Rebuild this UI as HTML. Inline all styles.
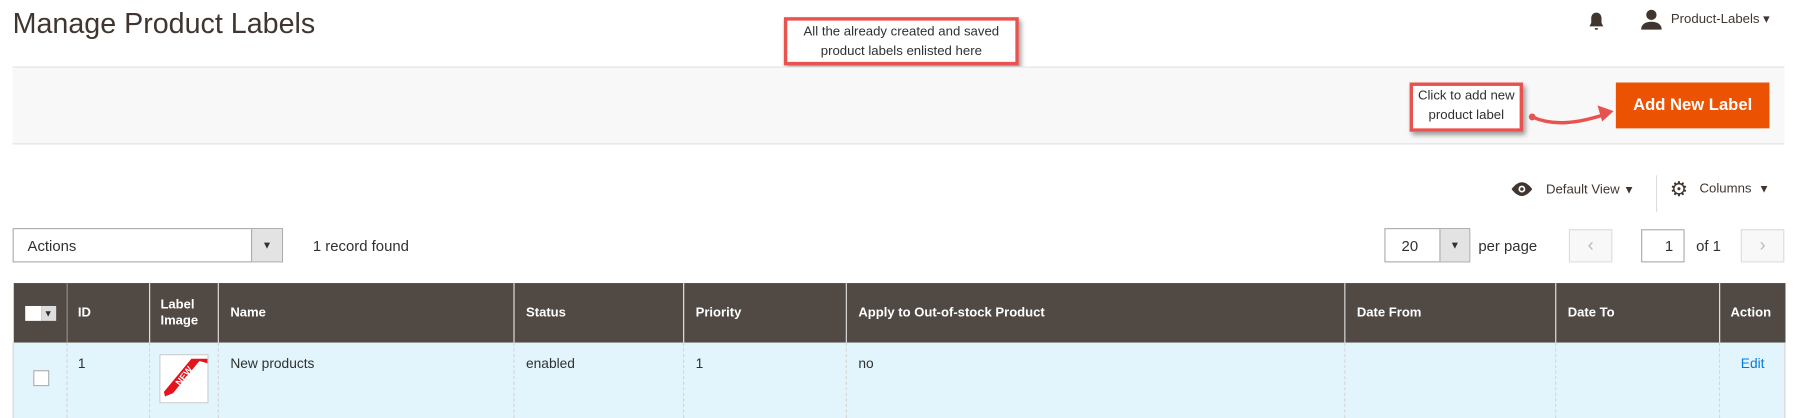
<!DOCTYPE html><html><head><style>
*{box-sizing:border-box;margin:0;padding:0}
body{width:1797px;height:417px;overflow:hidden;background:#fff;font-family:"Liberation Sans",sans-serif;color:#303030;position:relative}
#w{position:absolute;left:0;top:0;width:1568px;height:364px;transform:scale(1.146);transform-origin:0 0}
.a{position:absolute}
th,td{font-size:12px;text-align:left;vertical-align:top}
th{font-size:11.4px}
</style></head><body><div id="w">
<div class="a" style="left:11px;top:7px;font-size:25px;color:#41362f">Manage Product Labels</div>
<div class="a" style="left:684px;top:15px;width:205px;height:42px;border:3px solid #e9534f;background:#fff;box-shadow:2px 3px 4px #999;font-size:11.5px;text-align:center;line-height:17px;padding-top:2px">All the already created and saved<br>product labels enlisted here</div>
<svg class="a" style="left:1386px;top:10px" width="14" height="18" viewBox="0 0 14 18"><path d="M7 1c-3 0-4.5 2.5-4.5 5v4L1 13h12l-1.5-3V6C11.5 3.5 10 1 7 1z M5.5 14.5a1.5 1.5 0 003 0z" fill="#41362f"/></svg>
<svg class="a" style="left:1432px;top:8px" width="18" height="18" viewBox="0 0 18 18"><circle cx="9" cy="5" r="4.5" fill="#41362f"/><path d="M0 18c0-5 4-7 9-7s9 2 9 7z" fill="#41362f"/></svg>
<div class="a" style="left:1458px;top:9px;font-size:11.5px;color:#41362f">Product-Labels ▾</div>
<div class="a" style="left:11px;top:58px;width:1546px;height:68px;background:#f8f8f8;border-top:1px solid #e3e3e3;border-bottom:1px solid #e3e3e3"></div>
<div class="a" style="left:1230px;top:72px;width:99px;height:43px;border:3px solid #e9534f;background:#fff;box-shadow:2px 3px 4px #999;font-size:11.5px;text-align:center;line-height:17px;padding-top:1px">Click to add new<br>product label</div>
<svg class="a" style="left:1330px;top:80px" width="82" height="30"><path d="M7 22 C25 30 45 28 70 20" stroke="#e9534f" stroke-width="3" fill="none"/><circle cx="7" cy="22" r="3" fill="#e9534f"/><path d="M78 17 L64 12 L68 26z" fill="#e9534f"/></svg>
<div class="a" style="left:1410px;top:72px;width:134px;height:40px;background:#eb5202;color:#fff;font-weight:bold;font-size:14.5px;text-align:center;line-height:40px">Add New Label</div>
<svg class="a" style="left:1318px;top:158px" width="20" height="14" viewBox="0 0 20 14"><path d="M10 1C5 1 1 7 1 7s4 6 9 6 9-6 9-6-4-6-9-6z" fill="#41362f"/><circle cx="10" cy="7" r="3" fill="#fff"/><circle cx="10" cy="7" r="1.5" fill="#41362f"/></svg>
<div class="a" style="left:1349px;top:160px;font-size:11.5px;color:#41362f">Default View <span style="font-size:10px">▼</span></div>
<div class="a" style="left:1445px;top:153px;width:1px;height:32px;background:#ddd"></div>
<div class="a" style="left:1457px;top:156px;font-size:18px;color:#41362f;line-height:18px">⚙</div>
<div class="a" style="left:1483px;top:159px;font-size:11.5px;color:#41362f">Columns <span style="font-size:10px">&nbsp;▼</span></div>
<div class="a" style="left:11px;top:199px;width:236px;height:30px;border:1px solid #adadad;background:#fff;font-size:13px;padding:7px 12px">Actions</div>
<div class="a" style="left:219px;top:200px;width:27px;height:28px;background:#e3e3e3;border-left:1px solid #adadad;font-size:9px;text-align:center;line-height:28px">▼</div>
<div class="a" style="left:273px;top:207px;font-size:13px">1 record found</div>
<div class="a" style="left:1208px;top:199px;width:75px;height:30px;border:1px solid #adadad;font-size:13px;padding:7px 14px">20</div>
<div class="a" style="left:1256px;top:200px;width:26px;height:28px;background:#e3e3e3;border-left:1px solid #adadad;font-size:9px;text-align:center;line-height:28px">▼</div>
<div class="a" style="left:1290px;top:207px;font-size:13px">per page</div>
<div class="a" style="left:1369px;top:200px;width:38px;height:29px;border:1px solid #ddd;background:#f8f8f8;color:#bbb;text-align:center;line-height:27px;font-size:16px">‹</div>
<div class="a" style="left:1432px;top:200px;width:38px;height:29px;border:1px solid #adadad;font-size:13px;text-align:right;padding:6px 9px">1</div>
<div class="a" style="left:1480px;top:207px;font-size:13px">of 1</div>
<div class="a" style="left:1519px;top:200px;width:38px;height:29px;border:1px solid #ddd;background:#f8f8f8;color:#bbb;text-align:center;line-height:27px;font-size:16px">›</div>
<table class="a" style="left:11px;top:247px;width:1546px;border-collapse:collapse;table-layout:fixed">
<colgroup><col style="width:47px"><col style="width:72px"><col style="width:60px"><col style="width:258px"><col style="width:148px"><col style="width:142px"><col style="width:435px"><col style="width:184px"><col style="width:143px"><col style="width:57px"></colgroup>
<tr style="background:#514943;color:#fff;height:52px">
<th style="border-right:1px solid #8a837f;vertical-align:middle;padding-left:10px"><span style="display:inline-block;width:14px;height:13px;background:#fff;vertical-align:middle"></span><span style="display:inline-block;width:13px;height:13px;background:#ddd;color:#303030;font-size:8px;text-align:center;line-height:13px;vertical-align:middle">▼</span></th>
<th style="border-right:1px solid #ddd;vertical-align:middle;padding-left:9px">ID</th>
<th style="border-right:1px solid #ddd;vertical-align:middle;padding-left:9px;line-height:14px">Label<br>Image</th>
<th style="border-right:1px solid #ddd;vertical-align:middle;padding-left:10px">Name</th>
<th style="border-right:1px solid #ddd;vertical-align:middle;padding-left:10px">Status</th>
<th style="border-right:1px solid #ddd;vertical-align:middle;padding-left:10px">Priority</th>
<th style="border-right:1px solid #ddd;vertical-align:middle;padding-left:10px">Apply to Out-of-stock Product</th>
<th style="border-right:1px solid #ddd;vertical-align:middle;padding-left:10px">Date From</th>
<th style="border-right:1px solid #ddd;vertical-align:middle;padding-left:10px">Date To</th>
<th style="vertical-align:middle;padding-left:9px">Action</th></tr>
<tr style="background:#e2f5fd;height:64px">
<td style="border-left:1px solid #d6d6d6;border-right:1px dashed #d6d6d6;padding:24px 0 0 17px"><span style="display:inline-block;width:14px;height:14px;border:1px solid #adadad;background:#fff"></span></td>
<td style="border-right:1px dashed #d6d6d6;padding:11px 9px">1</td>
<td style="border-right:1px dashed #d6d6d6;padding:10px 8px"><svg width="43" height="43" viewBox="0 0 43 43"><rect x=".5" y=".5" width="42" height="42" fill="#fff" stroke="#ccc"/><path d="M5 37 L4 33 L28 4 L42 4 L42 8 L35 6 L12 34z" fill="#e3141b"/><text x="14" y="28" transform="rotate(-52 16 24)" font-size="8" font-weight="bold" fill="#fff" font-family="Liberation Sans">NEW</text></svg></td>
<td style="border-right:1px dashed #d6d6d6;padding:11px 10px">New products</td>
<td style="border-right:1px dashed #d6d6d6;padding:11px 10px">enabled</td>
<td style="border-right:1px dashed #d6d6d6;padding:11px 10px">1</td>
<td style="border-right:1px dashed #d6d6d6;padding:11px 10px">no</td>
<td style="border-right:1px dashed #d6d6d6"></td>
<td style="border-right:1px dashed #d6d6d6"></td>
<td style="border-right:1px solid #d6d6d6;padding:11px 18px;color:#007bdb">Edit</td></tr>
</table>
</div></body></html>
